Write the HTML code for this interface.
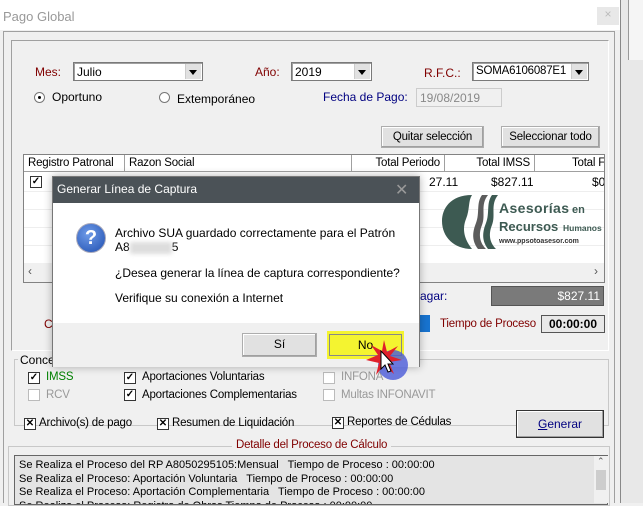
<!DOCTYPE html>
<html><head><meta charset="utf-8"><style>
*{margin:0;padding:0;box-sizing:border-box}
body{width:643px;height:503px;overflow:hidden;background:#f0f0f0;font-family:"Liberation Sans",sans-serif;font-size:12px;color:#000;position:relative}
.a{position:absolute;white-space:nowrap}
.btn{position:absolute;background:#e1e1e1;border:1px solid #adadad;text-align:center;box-shadow:inset -1px -1px 0 #a0a0a0,inset 1px 1px 0 #fff;line-height:20px}
.combo{position:absolute;background:#fff;border:1px solid #7a7a7a;box-shadow:inset 1px 1px 0 #a0a0a0}
.arr{position:absolute;right:1px;top:1px;bottom:1px;width:16px;background:#e1e1e1;border-left:1px solid #ccc}
.arr:after{content:"";position:absolute;left:3px;top:6px;border:4px solid transparent;border-top:5px solid #000}
.cb{position:absolute;width:12px;height:12px;border:1px solid #333;background:#fff;font-size:10px;line-height:10px;text-align:center;font-weight:bold}
.cbg{border-color:#bbb}
.red{color:#800000}.blue{color:#000080}
.hc{position:absolute;top:0;height:17px;border-right:1px solid #a0a0a0;background:#fff;padding:2px 4px;font-size:12px}
.n{font-size:11.5px;letter-spacing:-0.2px}
</style></head><body>
<div class="a" style="left:620px;top:0;width:23px;height:503px;background:#e8e8e8;border-left:1px solid #888"></div>
<div class="a" style="left:628px;top:0;width:15px;height:60px;background:#f5f5f5;border-left:1px solid #999"></div>

<div class="a" style="left:0;top:0;width:620px;height:30px;background:#fff"></div>
<div class="a" style="left:3px;top:9px;font-size:13px;color:#999">Pago Global</div>
<div class="a" style="left:597px;top:7px;width:22px;height:18px;background:#e8e8e8;color:#bbb;text-align:center;font-size:12px">×</div>
<div class="a" style="left:3px;top:31px;width:612px;height:472px;border:1px solid #a0a0a0;border-bottom:none"></div>
<div class="a" style="left:11px;top:40px;width:598px;height:311px;border:1px solid;border-color:#a0a0a0 #fff #fff #a0a0a0"></div>

<div class="a red" style="left:35px;top:65px">Mes:</div>
<div class="combo" style="left:73px;top:62px;width:130px;height:19px"><span class="a" style="left:3px;top:2px">Julio</span><div class="arr"></div></div>
<div class="a red" style="left:255px;top:65px">Año:</div>
<div class="combo" style="left:291px;top:62px;width:81px;height:19px"><span class="a" style="left:3px;top:2px">2019</span><div class="arr"></div></div>
<div class="a red" style="left:424px;top:66px">R.F.C.:</div>
<div class="combo" style="left:472px;top:62px;width:117px;height:19px"><span class="a n" style="left:3px;top:2px">SOMA6106087E1</span><div class="arr"></div></div>

<div class="a" style="left:34px;top:92px;width:11px;height:11px;border-radius:50%;border:1px solid #777;background:#fff"><div class="a" style="left:3px;top:3px;width:3px;height:3px;border-radius:50%;background:#000"></div></div>
<div class="a" style="left:52px;top:90px">Oportuno</div>
<div class="a" style="left:159px;top:92px;width:11px;height:11px;border-radius:50%;border:1px solid #777;background:#fff"></div>
<div class="a" style="left:177px;top:92px">Extemporáneo</div>
<div class="a blue" style="left:323px;top:90px">Fecha de Pago:</div>
<div class="a" style="left:416px;top:88px;width:86px;height:19px;border:1px solid #ccc;background:#f0f0f0;color:#888;padding:2px 3px">19/08/2019</div>

<div class="btn n" style="left:381px;top:126px;width:103px;height:22px">Quitar selección</div>
<div class="btn n" style="left:501px;top:126px;width:99px;height:22px">Seleccionar todo</div>

<div class="a" style="left:23px;top:154px;width:582px;height:129px;border:1px solid #828282;background:#fff;overflow:hidden">
 <div class="hc n" style="left:0;width:101px;border-bottom:1px solid #a0a0a0">Registro Patronal</div>
 <div class="hc n" style="left:101px;width:227px;border-bottom:1px solid #a0a0a0">Razon Social</div>
 <div class="hc n" style="left:328px;width:93px;text-align:right;border-bottom:1px solid #a0a0a0">Total Periodo</div>
 <div class="hc n" style="left:421px;width:90px;text-align:right;border-bottom:1px solid #a0a0a0">Total IMSS</div>
 <div class="hc n" style="left:511px;width:80px;border-bottom:1px solid #a0a0a0">&nbsp;&nbsp;&nbsp;&nbsp;&nbsp;&nbsp;&nbsp;&nbsp;&nbsp;&nbsp;&nbsp;Total F</div>
 <div class="cb" style="left:6px;top:21px">✓</div>
 <div class="a" style="left:405px;top:20px">27.11</div>
 <div class="a" style="left:467px;top:20px">$827.11</div>
 <div class="a" style="left:568px;top:20px">$0</div>
 <div class="a" style="left:0;top:36px;width:582px;height:1px;background:#eee"></div>
 <div class="a" style="left:0;top:54px;width:582px;height:1px;background:#eee"></div>
 <div class="a" style="left:0;top:72px;width:582px;height:1px;background:#eee"></div>
 <div class="a" style="left:0;top:90px;width:582px;height:1px;background:#eee"></div>
 <div class="a" style="left:0;top:108px;width:582px;height:19px;background:#f0f0f0"></div>
 <div class="a" style="left:4px;top:109px;color:#555">‹</div>
 <div class="a" style="left:570px;top:109px;color:#555">›</div>
 <svg class="a" style="left:418px;top:36px" width="160" height="62" viewBox="0 0 160 62">
  <path d="M30 4 C8 4 0 18 0 30 C0 46 12 58 30 58 C22 48 20 38 24 28 C28 18 26 10 30 4Z" fill="#3d5a52"/>
  <path d="M40 4 L46 4 C38 14 44 24 40 34 C36 44 38 52 44 58 L36 58 C30 50 30 42 34 32 C38 22 34 12 40 4Z" fill="#5c5c5c"/>
  <path d="M50 4 L56 4 C48 14 54 24 50 34 C46 44 48 52 54 58 L46 58 C40 50 40 42 44 32 C48 22 44 12 50 4Z" fill="#3d5a52"/>
  <text x="57" y="22" font-family="Liberation Sans" font-weight="bold" font-size="14" fill="#3d5a52" textLength="70">Asesorías</text>
  <text x="130" y="22" font-family="Liberation Sans" font-weight="bold" font-size="11" fill="#3d5a52">en</text>
  <text x="57" y="40" font-family="Liberation Sans" font-weight="bold" font-size="13" fill="#3d5a52">Recursos</text>
  <text x="121" y="40" font-family="Liberation Sans" font-weight="bold" font-size="8.5" fill="#3d5a52">Humanos</text>
  <text x="57" y="52" font-family="Liberation Sans" font-weight="bold" font-size="7" fill="#333">www.ppsotoasesor.com</text>
 </svg>
</div>

<div class="a blue" style="left:420px;top:289px">agar:</div>
<div class="a" style="left:491px;top:286px;width:113px;height:20px;background:#7a7a7a;border:1px solid #555;color:#fff;text-align:right;padding:2px 3px">$827.11</div>
<div class="a red" style="left:44px;top:317px">C</div>
<div class="a" style="left:420px;top:315px;width:10px;height:17px;background:#1874d0"></div>
<div class="a red n" style="left:440px;top:318px">Tiempo de Proceso</div>
<div class="a" style="left:541px;top:315px;width:64px;height:18px;border:1px solid #555;background:#e8e8e8;font-weight:bold;text-align:center;line-height:16px">00:00:00</div>

<div class="a" style="left:14px;top:359px;width:595px;height:67px;border:1px solid #c8c8c8"></div>
<div class="a" style="left:18px;top:353px;background:#f0f0f0;padding:0 2px">Conce</div>
<div class="cb" style="left:28px;top:372px">✓</div><div class="a n" style="left:46px;top:371px;color:#008000">IMSS</div>
<div class="cb cbg" style="left:28px;top:389px"></div><div class="a n" style="left:46px;top:389px;color:#999">RCV</div>
<div class="cb" style="left:124px;top:372px">✓</div><div class="a n" style="left:142px;top:371px">Aportaciones Voluntarias</div>
<div class="cb" style="left:124px;top:389px">✓</div><div class="a n" style="left:142px;top:389px">Aportaciones Complementarias</div>
<div class="cb cbg" style="left:323px;top:372px"></div><div class="a n" style="left:341px;top:371px;color:#999">INFONA</div>
<div class="cb cbg" style="left:323px;top:389px"></div><div class="a n" style="left:341px;top:389px;color:#999">Multas INFONAVIT</div>

<div class="cb" style="left:24px;top:418px">✕</div><div class="a n" style="left:39px;top:417px">Archivo(s) de pago</div>
<div class="cb" style="left:157px;top:418px">✕</div><div class="a n" style="left:172px;top:417px">Resumen de Liquidación</div>
<div class="cb" style="left:332px;top:417px">✕</div><div class="a n" style="left:347px;top:416px">Reportes de Cédulas</div>
<div class="btn" style="left:516px;top:410px;width:88px;height:28px;border:1px solid #333;line-height:26px;color:#000080"><u>G</u>enerar</div>

<div class="a" style="left:8px;top:446px;width:602px;height:60px;border:1px solid #c8c8c8"></div>
<div class="a red n" style="left:232px;top:439px;background:#f0f0f0;padding:0 4px">Detalle del Proceso de Cálculo</div>
<div class="a" style="left:14px;top:455px;width:594px;height:50px;border:1px solid #666;background:#e4e4e4;font-size:11px;line-height:13.5px;padding:3px 4px;overflow:hidden">
Se Realiza el Proceso del RP A8050295105:Mensual&nbsp;&nbsp; Tiempo de Proceso : 00:00:00<br>
Se Realiza el Proceso: Aportación Voluntaria&nbsp;&nbsp; Tiempo de Proceso : 00:00:00<br>
Se Realiza el Proceso: Aportación Complementaria&nbsp;&nbsp; Tiempo de Proceso : 00:00:00<br>
Se Realiza el Proceso: Registro de Obras Tiempo de Proceso : 00:00:00
</div>
<div class="a" style="left:594px;top:456px;width:14px;height:47px;background:#f0f0f0"></div>
<div class="a" style="left:596px;top:470px;width:10px;height:20px;background:#cdcdcd"></div>
<div class="a" style="left:597px;top:456px;font-size:9px;color:#555">⌃</div>

<div class="a" style="left:52px;top:176px;width:368px;height:191px;border:1px solid #777;background:#fff;box-shadow:0 0 8px rgba(0,0,0,.3)">
 <div class="a" style="left:0;top:0;width:366px;height:26px;background:#4b5257;color:#fff;font-size:12px;padding:5px 4px">Generar Línea de Captura</div>
 <div class="a" style="left:342px;top:3px;color:#999;font-size:16px">✕</div>
 <div class="a" style="left:23px;top:46px;width:30px;height:30px;border-radius:50%;background:radial-gradient(circle at 40% 35%,#6f9be8,#1f4fb0);border:1px solid #aab;color:#fff;font-weight:bold;font-size:20px;text-align:center;line-height:28px">?</div>
 <div class="a" style="left:62px;top:49px;font-size:12px;line-height:14px">Archivo SUA guardado correctamente para el Patrón<br>A8<span style="display:inline-block;width:42px;height:12px;background:#ddd;filter:blur(2px);vertical-align:middle"></span>5</div>
 <div class="a" style="left:62px;top:89px">¿Desea generar la línea de captura correspondiente?</div>
 <div class="a" style="left:62px;top:114px">Verifique su conexión a Internet</div>
 <div class="a" style="left:0;top:146px;width:366px;height:44px;background:#f0f0f0"></div>
 <div class="btn" style="left:189px;top:156px;width:75px;height:24px">Sí</div>
 <div class="a" style="left:274px;top:154px;width:77px;height:28px;background:#f4f430"></div>
 <div class="a" style="left:276px;top:157px;width:73px;height:22px;border:1px solid #888;text-align:center;line-height:20px">No</div>
</div>
<div class="a" style="left:378px;top:350px;width:30px;height:30px;border-radius:50%;background:#4a5ad8;opacity:.8"></div>
<svg class="a" style="left:366px;top:340px" width="36" height="36" viewBox="0 0 36 36"><polygon points="18,0 21,12 32,6 24,16 36,20 23,22 28,34 18,25 10,35 13,23 0,20 12,15 5,5 16,11" fill="#e0202a"/></svg>
<svg class="a" style="left:380px;top:350px" width="14" height="24" viewBox="0 0 14 24"><path d="M1 1 L1 19 L5 15 L8 22 L11 21 L8 14 L13 14 Z" fill="#fff" stroke="#000"/></svg>
</body></html>
